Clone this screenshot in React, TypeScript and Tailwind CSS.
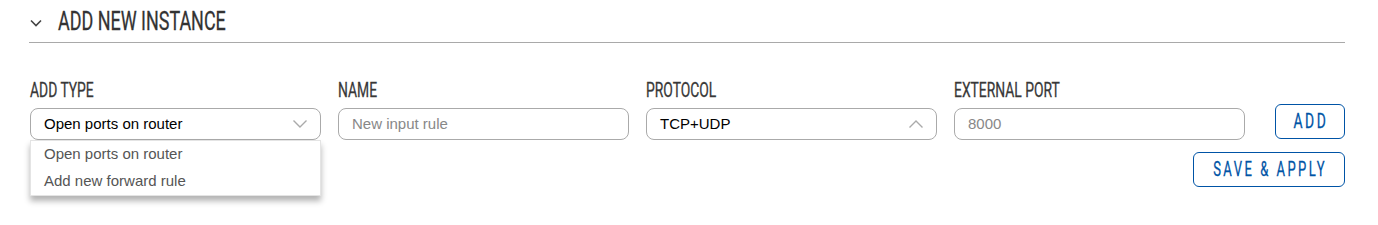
const body = { fontFamily: '"Liberation Sans", Arial, sans-serif' };
const cond = { fontFamily: 'Roboto, "Liberation Sans", sans-serif' };

function Narrow({ children, className = "" }: { children: React.ReactNode; className?: string }) {
    return <span className={"inline-block whitespace-nowrap " + className} style={cond}>{children}</span>;
}

function Chevron({ up = false, className = "" }: { up?: boolean; className?: string }) {
    return (
        <svg width="16" height="10" viewBox="0 0 16 10" fill="none" className={className}>
            <path d={up ? "M1.5 8.5L8 2L14.5 8.5" : "M1.5 1.5L8 8L14.5 1.5"} stroke="currentColor" strokeWidth="1.4" />
        </svg>
    );
}

function Field({ label, children }: { label: string; children: React.ReactNode }) {
    return (
        <div className="w-[291px] shrink-0 relative">
            <label className="block text-[21px] leading-[22px] text-[#383838]">
                <Narrow className="origin-left scale-x-[0.66] font-normal [-webkit-text-stroke:0.3px_#383838]">{label}</Narrow>
            </label>
            {children}
        </div>
    );
}

export default function App() {
    return (
        <main className="w-full h-[225px] bg-white" style={body}>
            <div className="ml-[29px] w-[1316px]">
                <div className="flex items-center h-[43px] border-b border-[#a9a9a9]">
                    <svg width="12" height="8" viewBox="0 0 12 8" fill="none" className="ml-[1px] mt-[4px] text-[#444] shrink-0">
                        <path d="M1 1.5L6 6.5L11 1.5" stroke="currentColor" strokeWidth="1.6" />
                    </svg>
                    <h1 className="ml-[16px] text-[26px] leading-none text-[#333]">
                        <Narrow className="origin-left scale-x-[0.69] font-normal [-webkit-text-stroke:0.3px_#333]">ADD NEW INSTANCE</Narrow>
                    </h1>
                </div>

                <div className="flex gap-[17px] mt-[36px] pl-[1px]">
                    <Field label="ADD TYPE">
                        <div className="mt-[7px] h-[32px] flex items-center justify-between pl-[13px] pr-[12px] border border-[#aaa] rounded-[8px] text-[15px] text-black">
                            <span>Open ports on router</span>
                            <Chevron className="text-[#aaa]" />
                        </div>
                        <div className="absolute left-0 top-[61px] w-[291px] bg-white border border-[#e4e4e4] shadow-[0_5px_6px_rgba(0,0,0,0.3)] text-[15px] text-[#555] z-10">
                            <div className="pl-[13px] h-[27px] flex items-center">Open ports on router</div>
                            <div className="pl-[13px] h-[27px] flex items-center">Add new forward rule</div>
                        </div>
                    </Field>

                    <Field label="NAME">
                        <div className="mt-[7px] h-[32px] flex items-center pl-[13px] border border-[#aaa] rounded-[8px] text-[15px] text-[#888]">
                            New input rule
                        </div>
                    </Field>

                    <Field label="PROTOCOL">
                        <div className="mt-[7px] h-[32px] flex items-center justify-between pl-[13px] pr-[12px] border border-[#aaa] rounded-[8px] text-[15px] text-black">
                            <span>TCP+UDP</span>
                            <Chevron up className="text-[#aaa]" />
                        </div>
                    </Field>

                    <Field label="EXTERNAL PORT">
                        <div className="mt-[7px] h-[32px] flex items-center pl-[13px] border border-[#aaa] rounded-[8px] text-[15px] text-[#888]">
                            8000
                        </div>
                    </Field>

                    <div className="ml-auto mt-[25px]">
                        <button className="h-[35px] w-[70px] flex items-center justify-center border border-[#0054a6] rounded-[6px] text-[#0054a6] text-[21px] tracking-[4px] leading-none">
                            <Narrow className="origin-center pl-[4px] scale-x-[0.66] [-webkit-text-stroke:0.3px_#0054a6]">ADD</Narrow>
                        </button>
                    </div>
                </div>

                <div className="flex justify-end mt-[12px]">
                    <button className="h-[35px] w-[152px] flex items-center justify-center border border-[#0054a6] rounded-[6px] text-[#0054a6] text-[21px] tracking-[4px] leading-none">
                        <Narrow className="origin-center pl-[4px] scale-x-[0.62] [-webkit-text-stroke:0.3px_#0054a6]">SAVE &amp; APPLY</Narrow>
                    </button>
                </div>
            </div>
        </main>
    );
}
